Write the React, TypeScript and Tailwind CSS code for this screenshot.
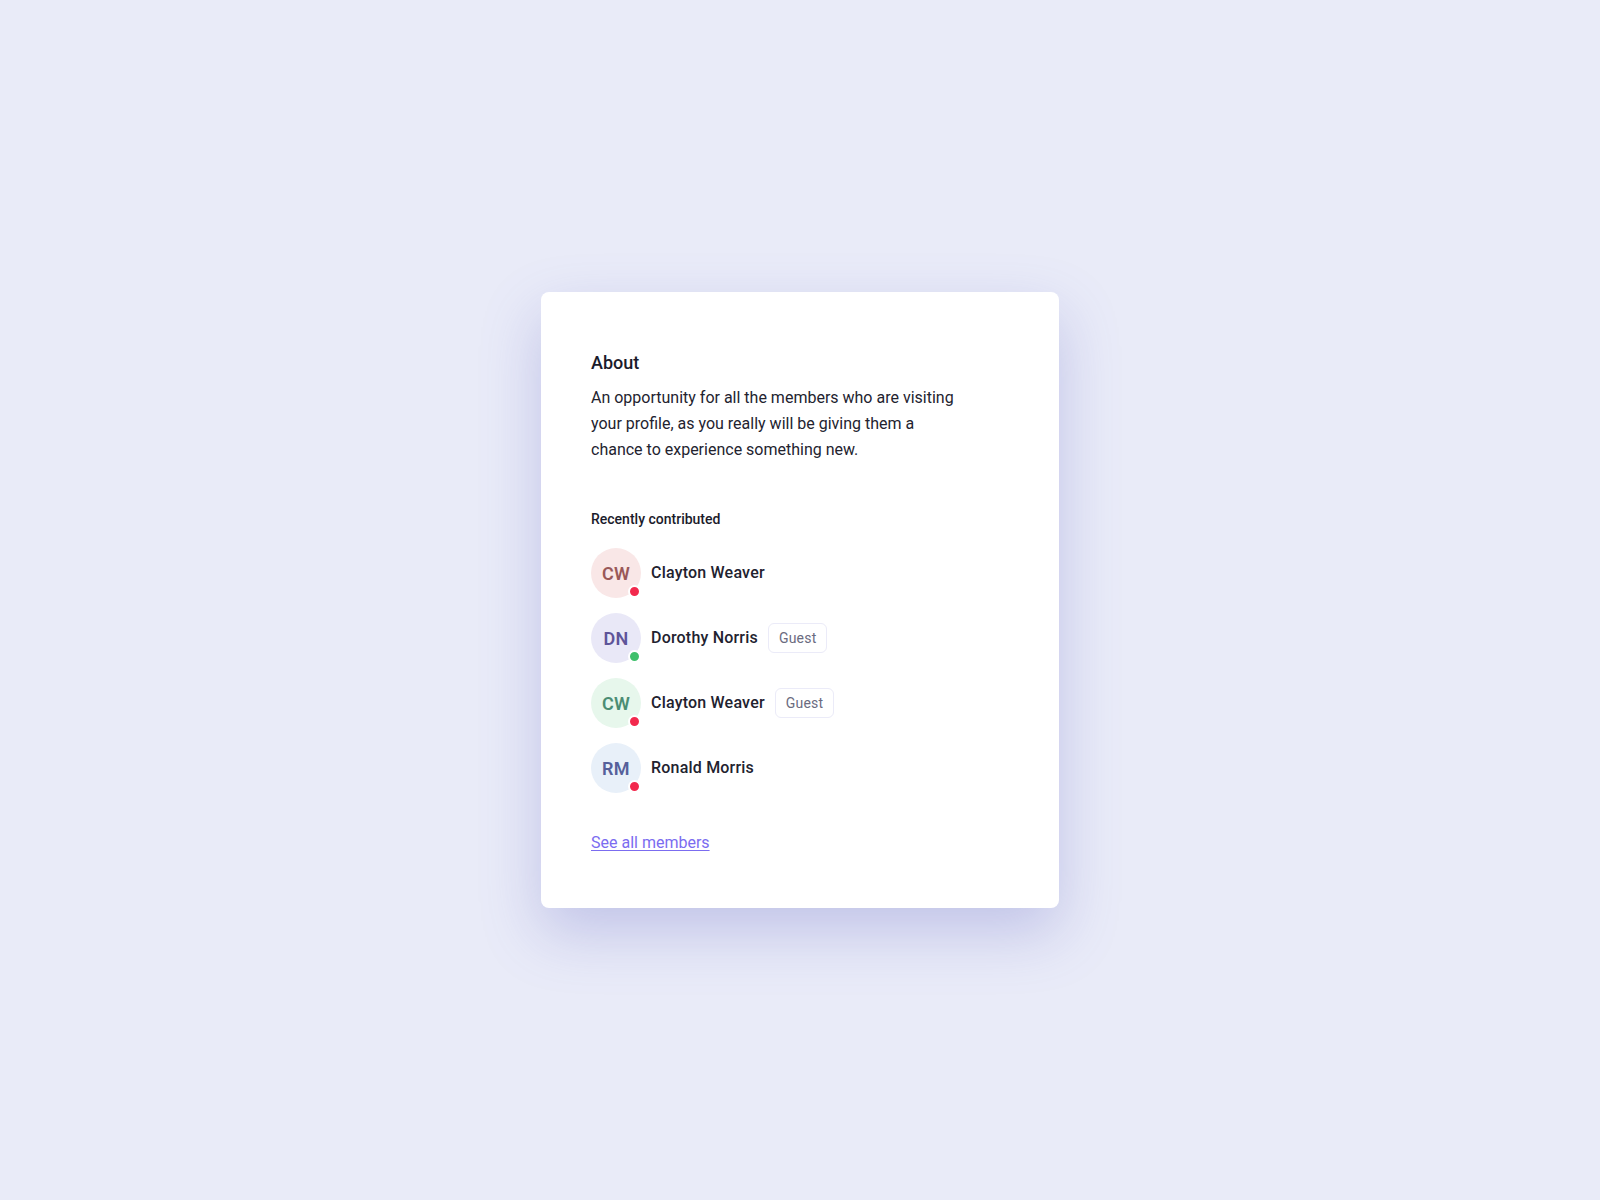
import React from "react";

type Member = {
  initials: string;
  name: string;
  bg: string;
  fg: string;
  online: boolean;
  guest: boolean;
};

const members: Member[] = [
  { initials: "CW", name: "Clayton Weaver", bg: "bg-[#f9e7e7]", fg: "text-[#9a5858]", online: false, guest: false },
  { initials: "DN", name: "Dorothy Norris", bg: "bg-[#e9e8f7]", fg: "text-[#5e5499]", online: true, guest: true },
  { initials: "CW", name: "Clayton Weaver", bg: "bg-[#e7f7ec]", fg: "text-[#4b8d73]", online: false, guest: true },
  { initials: "RM", name: "Ronald Morris", bg: "bg-[#e8f0f9]", fg: "text-[#56609b]", online: false, guest: false },
];

export default function App() {
  return (
    <div
      className="min-h-screen w-full bg-[#e9ebf8] flex items-center justify-center"
      style={{ fontFamily: "Roboto, 'Noto Sans', sans-serif" }}
    >
      <div className="w-[518px] bg-white rounded-lg shadow-[0_24px_60px_rgba(88,92,190,0.28)] pt-[57px] pb-[53px] px-[50px]">
        <h2 className="text-[18px] leading-[28px] font-medium text-[#1b1b2b]">About</h2>
        <p className="mt-2 text-[16px] leading-[26px] text-[#23232f]">
          <span className="block">An opportunity for all the members who are visiting</span>
          <span className="block">your profile, as you really will be giving them a</span>
          <span className="block">chance to experience something new.</span>
        </p>

        <h3 className="mt-[46px] text-[14px] leading-[20px] font-medium text-[#1b1b2b]">
          Recently contributed
        </h3>

        <ul className="mt-[19px] flex flex-col gap-[15px]">
          {members.map((m, i) => (
            <li key={i} className="flex items-center">
              <div className="relative w-[50px] h-[50px] shrink-0">
                <div
                  className={`w-[50px] h-[50px] rounded-full flex items-center justify-center ${m.bg} ${m.fg} text-[18px] font-semibold tracking-[0.3px]`}
                >
                  {m.initials}
                </div>
                <span
                  className={`absolute right-0 bottom-0 w-[13px] h-[13px] rounded-full border-2 border-white ${
                    m.online ? "bg-[#3fc06b]" : "bg-[#f2294d]"
                  }`}
                />
              </div>
              <span className="ml-[10px] text-[16px] leading-[24px] font-medium tracking-[0.2px] text-[#22222f]">
                {m.name}
              </span>
              {m.guest && (
                <span className="ml-[10px] h-[30px] px-[10px] flex items-center rounded-md border border-[#ebebf8] text-[14px] tracking-[0.2px] text-[#6b6b80]">
                  Guest
                </span>
              )}
            </li>
          ))}
        </ul>

        <a
          href="#"
          className="mt-[38px] inline-block text-[16px] leading-[24px] text-[#7b6cf0] underline underline-offset-2"
        >
          See all members
        </a>
      </div>
    </div>
  );
}
